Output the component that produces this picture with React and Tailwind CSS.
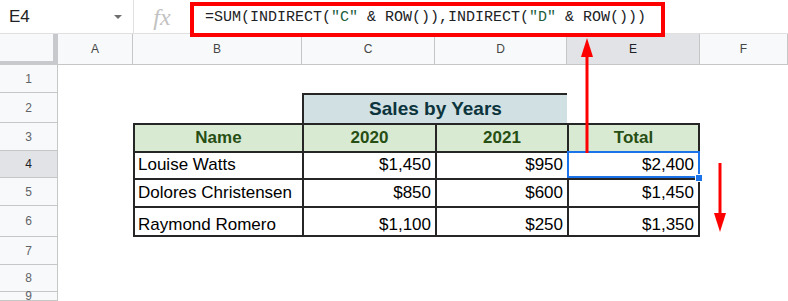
import React from "react";

const COLS = ["A", "B", "C", "D", "E", "F"];

const data = [
  { name: "Louise Watts", y20: "$1,450", y21: "$950", total: "$2,400" },
  { name: "Dolores Christensen", y20: "$850", y21: "$600", total: "$1,450" },
  { name: "Raymond Romero", y20: "$1,100", y21: "$250", total: "$1,350" },
];

function RowHead({ n, active }) {
  return (
    <div
      className={`flex items-center justify-center border-r border-b border-[#c4c7c5] text-[12px] ${
        active ? "bg-[#e1e3e6] text-[#202124]" : "bg-[#f8f9fa] text-[#5f6368]"
      }`}
    >
      {n}
    </div>
  );
}

function Blank() {
  return <div className="bg-white" />;
}

// bordered table cell
function Cell({ children, align = "left", last, right, className = "" }) {
  const justify =
    align === "right" ? "justify-end pr-[4px]" : align === "center" ? "justify-center" : "justify-start pl-[3px]";
  return (
    <div
      className={`flex items-end border-l-2 border-t-2 border-[#262626] leading-none ${justify} ${
        last ? "border-b-2 pb-[2px]" : "pb-[5px]"
      } ${right ? "border-r-2" : ""} ${className}`}
    >
      {children}
    </div>
  );
}

export default function App() {
  return (
    <div className="relative w-[788px] h-[301px] overflow-hidden bg-white font-['Liberation_Sans',Arial,sans-serif]">
      {/* formula bar */}
      <div className="flex h-[34px] border-b border-[#e0e0e0]">
        <div className="flex w-[134px] items-center justify-between border-r border-[#e0e0e0] pl-[9px] pr-[11px]">
          <span className="text-[17px] text-[#202124]">E4</span>
          <span className="h-0 w-0 border-l-[4px] border-r-[4px] border-t-[4px] border-l-transparent border-r-transparent border-t-[#6f6f6f]" />
        </div>
        <div className="flex w-[56px] items-center justify-center">
          <span className="font-['Liberation_Serif',serif] text-[24px] italic leading-none text-[#c2c2c2]">fx</span>
        </div>
        <div className="flex flex-1 items-center pl-[15px] pt-[3px] font-['Liberation_Mono',monospace] text-[15px] text-[#202124]">
          <span>
            =SUM(INDIRECT(<span className="text-[#1b5e3b]">"C"</span> &amp; ROW()),INDIRECT(
            <span className="text-[#1b5e3b]">"D"</span> &amp; ROW()))
          </span>
        </div>
      </div>

      {/* sheet grid */}
      <div className="grid grid-cols-[58px_75px_169px_133px_132px_133px_88px] grid-rows-[31px_28px_30px_28px_27px_28px_31px_28px_27px_9px]">
        {/* column headers */}
        <div className="border-r-[5px] border-b-[4px] border-[#c7c9cc] bg-[#f8f9fa]" />
        {COLS.map((c) => (
          <div
            key={c}
            className={`flex items-center justify-center border-r border-b border-[#c4c7c5] text-[12px] ${
              c === "E" ? "bg-[#e1e3e6] text-[#202124]" : "bg-[#f8f9fa] text-[#444746]"
            }`}
          >
            {c}
          </div>
        ))}

        {/* row 1 */}
        <RowHead n={1} />
        <Blank /><Blank /><Blank /><Blank /><Blank /><Blank />

        {/* row 2 */}
        <RowHead n={2} />
        <Blank /><Blank />
        <Cell
          align="center"
          right
          className="col-span-2 -mr-[2px] bg-[#d0e0e3] text-[19px] font-bold text-[#0c343d]"
        >
          Sales by Years
        </Cell>
        <Blank /><Blank />

        {/* row 3 */}
        <RowHead n={3} />
        <Blank />
        {["Name", "2020", "2021", "Total"].map((h, i) => (
          <Cell
            key={h}
            align="center"
            right={i === 3}
            className="bg-[#d9ead3] text-[17px] font-bold text-[#274e13]"
          >
            {h}
          </Cell>
        ))}
        <Blank />

        {/* data rows */}
        {data.map((r, i) => (
          <React.Fragment key={r.name}>
            <RowHead n={4 + i} active={i === 0} />
            <Blank />
            <Cell last={i === 2} className="text-[17px] text-black">{r.name}</Cell>
            <Cell last={i === 2} align="right" className="text-[17px] text-black">{r.y20}</Cell>
            <Cell last={i === 2} align="right" className="text-[17px] text-black">{r.y21}</Cell>
            <Cell last={i === 2} align="right" right className="text-[17px] text-black">{r.total}</Cell>
            <Blank />
          </React.Fragment>
        ))}

        {/* rows 7-9 */}
        {[7, 8, 9].map((n) => (
          <React.Fragment key={n}>
            <RowHead n={n} />
            <Blank /><Blank /><Blank /><Blank /><Blank /><Blank />
          </React.Fragment>
        ))}
      </div>

      {/* red highlight around formula */}
      <div className="pointer-events-none absolute left-[190px] top-[2px] h-[35px] w-[475px] border-4 border-[#ff0000]" />

      {/* selection on E4 */}
      <div className="pointer-events-none absolute left-[567px] top-[151px] h-[27px] w-[133px] border-2 border-[#1a73e8]" />
      <div className="pointer-events-none absolute left-[695px] top-[174px] h-[8px] w-[8px] border border-white bg-[#1a73e8]" />

      {/* arrows */}
      <svg className="pointer-events-none absolute left-0 top-0" width="788" height="301">
        <line x1="587" y1="153" x2="587" y2="54" stroke="#ff0000" strokeWidth="3" />
        <polygon points="587,38 581,57 593,57" fill="#ff0000" />
        <line x1="720" y1="163" x2="720" y2="216" stroke="#ff0000" strokeWidth="3" />
        <polygon points="720,232 714,213 726,213" fill="#ff0000" />
      </svg>
    </div>
  );
}
